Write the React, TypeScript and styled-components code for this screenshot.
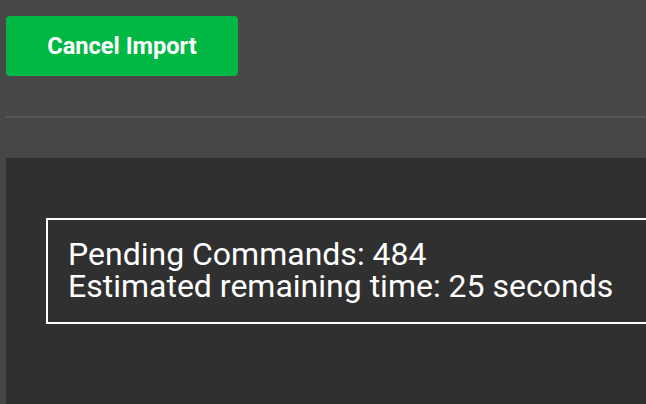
import React from "react";
import styled, { createGlobalStyle } from "styled-components";

const Global = createGlobalStyle`
  html, body {
    margin: 0;
    padding: 0;
    overflow: hidden;
    background: #474747;
    font-family: Roboto, "Liberation Sans", Arial, sans-serif;
  }
  #root {
    min-height: 404px;
  }
`;

const Page = styled.div`
  display: flex;
  flex-direction: column;
  padding: 16px 0 0 6px;
  min-height: 388px;
  box-sizing: border-box;
`;

const CancelButton = styled.button`
  width: 232px;
  height: 60px;
  border: none;
  border-radius: 4px;
  background: #00b843;
  color: #ffffff;
  font-family: Roboto, "Liberation Sans", Arial, sans-serif;
  font-weight: 700;
  font-size: 23.6px;
  cursor: pointer;
  padding: 0;
`;

const Divider = styled.hr`
  margin: 40px 0 40px 0;
  border: none;
  height: 2px;
  background: #575757;
`;

const Panel = styled.section`
  flex: 1;
  background: #303030;
  padding: 60px 0 0 40px;
  min-height: 246px;
  box-sizing: border-box;
  overflow: hidden;
`;

const StatusBox = styled.div`
  width: 640px;
  border: 2px solid #ffffff;
  padding: 19px 20px 20px;
  color: #ffffff;
  font-size: 32px;
  line-height: 31.5px;
  box-sizing: border-box;
`;

const StatusLine = styled.div`
  white-space: nowrap;
`;

export default function App() {
  return (
    <>
      <Global />
      <Page>
        <div>
          <CancelButton>Cancel Import</CancelButton>
        </div>
        <Divider />
        <Panel>
          <StatusBox>
            <StatusLine>Pending Commands: 484</StatusLine>
            <StatusLine>Estimated remaining time: 25 seconds</StatusLine>
          </StatusBox>
        </Panel>
      </Page>
    </>
  );
}
